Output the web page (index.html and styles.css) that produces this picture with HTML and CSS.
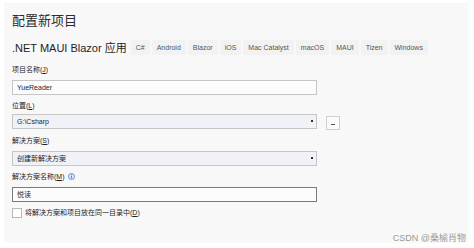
FILE: index.html
```html
<!doctype html>
<html>

<head>
    <meta charset="utf-8">
    <title>配置新项目</title>
    <link rel="stylesheet" href="styles.css">
</head>

<body>
    <div class="dialog">
        <h1 class="title">配置新项目</h1>
        <div class="template">
            <span class="template-name">.NET MAUI Blazor 应用</span>
            <ul class="tags">
                <li>C#</li>
                <li>Android</li>
                <li>Blazor</li>
                <li>iOS</li>
                <li>Mac Catalyst</li>
                <li>macOS</li>
                <li>MAUI</li>
                <li>Tizen</li>
                <li>Windows</li>
            </ul>
        </div>

        <div class="field">
            <label class="label">项目名称(<u>J</u>)</label>
            <div class="input">YueReader</div>
        </div>

        <div class="field">
            <label class="label">位置(<u>L</u>)</label>
            <div class="row">
                <div class="input combo">G:\Csharp<span class="arrow"></span></div>
                <div class="browse"><span class="dots"></span></div>
            </div>
        </div>

        <div class="field">
            <label class="label">解决方案(<u>S</u>)</label>
            <div class="input combo">创建新解决方案<span class="arrow"></span></div>
        </div>

        <div class="field">
            <label class="label">解决方案名称(<u>M</u>)<svg class="info" width="7" height="7" viewBox="0 0 10 10">
                    <circle cx="5" cy="5" r="4.3" fill="#dbe9f7" stroke="#3f87d4" stroke-width="1.2" />
                    <rect x="4.3" y="4.2" width="1.4" height="3.3" fill="#3f87d4" />
                    <rect x="4.3" y="2.3" width="1.4" height="1.3" fill="#3f87d4" />
                </svg></label>
            <div class="input focus">悦读</div>
        </div>

        <div class="check">
            <span class="box"></span>
            <span>将解决方案和项目放在同一目录中(<u>D</u>)</span>
        </div>

        <div class="watermark">CSDN @桑榆肖物</div>
    </div>
</body>

</html>
```

FILE: styles.css
```css
html,
body {
    margin: 0;
    padding: 0;
    background: #ffffff;
}

body {
    font-family: "Liberation Sans", "Noto Sans CJK SC", sans-serif;
    color: #1e1e1e;
    padding: 3px 6px 5px 4px;
}

.dialog {
    position: relative;
    height: 240px;
    background: #f8f8f8;
    padding: 0 8px;
    box-sizing: border-box;
}

.title {
    margin: 0;
    padding-top: 5px;
    font-family: "Noto Sans CJK SC", sans-serif;
    font-size: 13px;
    font-weight: normal;
    line-height: 24px;
    color: #2b2b2b;
}

.template {
    display: flex;
    align-items: center;
    margin-top: 6px;
    padding-bottom: 3px;
    height: 18px;
}

.template-name {
    font-size: 11px;
    color: #1e1e1e;
    margin-right: 4px;
    white-space: nowrap;
}

.tags {
    display: flex;
    gap: 2px;
    margin: 0;
    padding: 0;
    list-style: none;
}

.tags li {
    font-size: 7px;
    color: #555;
    background: #f2f2f2;
    padding: 4px 5px;
    border-radius: 2px;
    white-space: nowrap;
}

.field {
    margin-top: 5px;
}

.label {
    display: block;
    font-size: 7px;
    line-height: 11px;
    height: 11px;
    color: #1e1e1e;
}

.info {
    margin-left: 3px;
    vertical-align: -1px;
}

.input {
    position: relative;
    margin-top: 5px;
    width: 305px;
    height: 15px;
    box-sizing: border-box;
    border: 1px solid #c6c6c6;
    background: #fcfcfd;
    font-size: 7px;
    line-height: 13px;
    padding-left: 4px;
    color: #1e1e1e;
}

.combo {
    background: #f1f2f8;
}

.focus {
    border-color: #7a7a7a;
}

.arrow {
    position: absolute;
    right: 3px;
    top: 5px;
    width: 2px;
    height: 2px;
    background: #333;
}

.row {
    display: flex;
    align-items: flex-start;
    gap: 9px;
    margin-bottom: 2px;
}

.row .input {
    margin-top: 3px;
}

.browse {
    margin-top: 5px;
    width: 14px;
    height: 14px;
    box-sizing: border-box;
    border: 1px solid #cfcfcf;
    background: #fbfbfb;
    position: relative;
}

.dots {
    position: absolute;
    left: 4px;
    top: 7px;
    width: 4px;
    height: 1px;
    background: #555;
}

.check {
    display: flex;
    align-items: center;
    gap: 3px;
    margin-top: 5px;
    font-size: 7px;
    line-height: 11px;
    color: #1e1e1e;
}

.box {
    width: 10px;
    height: 10px;
    box-sizing: border-box;
    border: 1px solid #b8b8b8;
    background: #fff;
}

.watermark {
    position: absolute;
    right: 2px;
    bottom: -1px;
    font-size: 9px;
    color: #9a9a9a;
}
```
